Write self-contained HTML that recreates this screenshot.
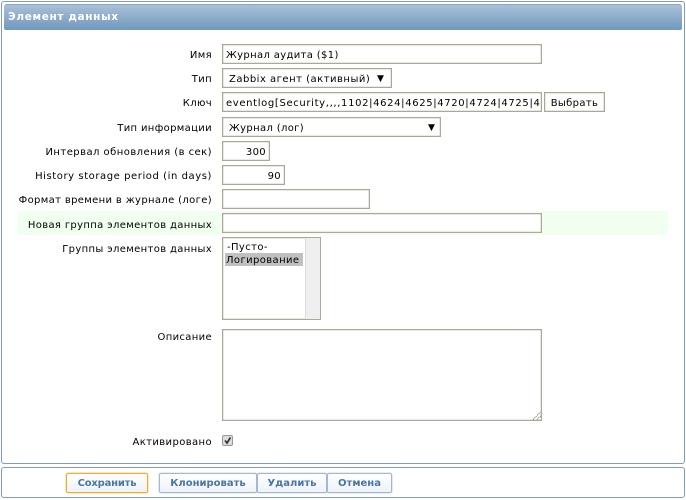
<!DOCTYPE html>
<html><head><meta charset="utf-8">
<style>
html,body{margin:0;padding:0;background:#fff;}
body{width:686px;height:500px;position:relative;overflow:hidden;font-family:"DejaVu Sans",sans-serif;font-size:10px;color:#000;}
div{position:absolute;box-sizing:border-box;}
.p{border:1px solid #7f9cbd;border-radius:3px;background:#fff;}
.l{left:18px;width:194px;text-align:right;white-space:nowrap;height:14px;line-height:14px;letter-spacing:.35px;}
.f{border:1px solid #aca899;box-shadow:inset 0 0 0 .25px #aca899;background:#fff;white-space:nowrap;overflow:hidden;line-height:21px;letter-spacing:.35px;}
.b{height:20px;top:473px;border:1px solid #a3b8d4;box-shadow:0 0 0 .3px #a3b8d4;background:linear-gradient(#fff,#eef3f8);color:#4a76a4;font-weight:bold;font-size:10px;text-align:center;line-height:20px;border-radius:2px;}
</style></head><body>
<div class="p" style="left:1px;top:1px;width:684px;height:463px;"></div>
<div class="p" style="left:1px;top:467px;width:684px;height:31px;"></div>
<div style="left:4px;top:4px;width:678px;height:26px;border-radius:3px 3px 2px 2px;background:linear-gradient(#a9c0d8,#7098bd);border-top:1px solid #8aa6c4;color:#fff;font-weight:bold;font-size:10.5px;line-height:25px;padding-left:4px;letter-spacing:.65px;">Элемент данных</div>

<div class="l" style="top:49px;">Имя</div>
<div class="f" style="left:222px;top:44px;width:320px;height:20px;padding-left:3px;">Журнал аудита ($1)</div>
<div class="l" style="top:73px;">Тип</div>
<div class="f" style="left:222px;top:68px;width:170px;height:20px;padding-left:6px;letter-spacing:.5px;">Zabbix агент (активный)<span style="position:absolute;left:154px;top:0;font-size:9px;">▼</span></div>
<div class="l" style="top:97px;">Ключ</div>
<div class="f" style="left:222px;top:92px;width:320px;height:20px;padding-left:3px;letter-spacing:.65px;">eventlog[Security,,,,1102|4624|4625|4720|4724|4725|4726]</div>
<div class="f" style="left:544px;top:92px;width:61px;height:20px;text-align:center;background:#fefefe;line-height:21px;">Выбрать</div>
<div class="l" style="top:122px;">Тип информации</div>
<div class="f" style="left:222px;top:117px;width:219px;height:20px;padding-left:6px;">Журнал (лог)<span style="position:absolute;left:205px;top:0;font-size:9px;">▼</span></div>
<div class="l" style="top:146px;letter-spacing:.46px;">Интервал обновления (в сек)</div>
<div class="f" style="left:222px;top:141px;width:48px;height:20px;text-align:right;padding-right:3px;">300</div>
<div class="l" style="top:170px;letter-spacing:.57px;">History storage period (in days)</div>
<div class="f" style="left:222px;top:165px;width:63px;height:20px;text-align:right;padding-right:3px;">90</div>
<div class="l" style="top:194px;">Формат времени в журнале (логе)</div>
<div class="f" style="left:222px;top:189px;width:148px;height:20px;"></div>
<div style="left:18px;top:211px;width:650px;height:24px;background:#f0fff0;"></div>
<div class="l" style="top:219px;">Новая группа элементов данных</div>
<div class="f" style="left:222px;top:213px;width:320px;height:20px;"></div>
<div class="l" style="top:243px;">Группы элементов данных</div>
<div class="f" style="left:222px;top:237px;width:99px;height:83px;"></div>
<div style="left:305px;top:238px;width:15px;height:81px;background:#efefef;border-left:1px solid #ddd;"></div>
<div style="left:225px;top:240px;height:13px;width:78px;line-height:15px;padding-left:2px;letter-spacing:.4px;">-Пусто-</div>
<div style="left:225px;top:253px;height:13px;width:78px;line-height:15px;background:#c0c0c0;padding-left:1px;letter-spacing:.4px;">Логирование</div>
<div class="l" style="top:331px;">Описание</div>
<div class="f" style="left:222px;top:329px;width:320px;height:92px;"></div>
<svg style="position:absolute;left:532px;top:411px;" width="10" height="10"><path d="M1 8.5L8.5 1M5 8.5L8.5 5" stroke="#666" stroke-width="1" stroke-dasharray="1 1" fill="none"/></svg>
<div class="l" style="top:436px;letter-spacing:.4px;">Активировано</div>
<div style="left:222px;top:435px;width:11px;height:11px;border:1px solid #999;border-radius:2px;background:#ddd;"></div>
<svg style="position:absolute;left:222px;top:435px;" width="11" height="11"><path d="M3 5.5L5 8L8.5 2.5" stroke="#333" stroke-width="1.7" fill="none"/></svg>

<div class="b" style="left:66px;width:82px;border-color:#fba928;box-shadow:0 0 0 .3px #fba928;letter-spacing:-.2px;">Сохранить</div>
<div class="b" style="left:159px;width:98px;">Клонировать</div>
<div class="b" style="left:257px;width:70px;">Удалить</div>
<div class="b" style="left:327px;width:65px;">Отмена</div>
</body></html>
